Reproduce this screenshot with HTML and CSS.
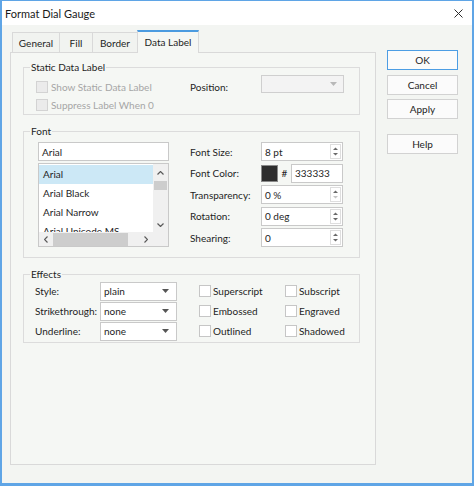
FILE: index.html
```html
<!DOCTYPE html>
<html>
<head>
<meta charset="utf-8">
<title>Format Dial Gauge</title>
<link rel="stylesheet" href="styles.css">
</head>
<body>
<div class="window">
  <div class="titlebar">
    <span class="title">Format Dial Gauge</span>
    <svg class="close" viewBox="0 0 9 9"><path d="M0.5 0.5L8.5 8.5M8.5 0.5L0.5 8.5" stroke="#2b2b2b" stroke-width="1" fill="none"/></svg>
  </div>
  <div class="client">
    <div class="tabs-wrap">
      <div class="tabstrip">
        <div class="tab t-general">General</div>
        <div class="tab t-fill">Fill</div>
        <div class="tab t-border">Border</div>
        <div class="tab t-label active">Data Label</div>
      </div>
      <div class="panel">
        <div class="group g-static">
          <div class="group-title">Static Data Label</div>
          <div class="static-grid">
            <label class="check disabled"><span class="box"></span>Show Static Data Label</label>
            <span class="lbl">Position:</span>
            <div class="combo pos-combo disabled"><span class="combo-val"></span><svg class="arrow" viewBox="0 0 7 4"><path d="M0 0H7L3.5 4Z" fill="#b8b8b8"/></svg></div>
            <label class="check disabled"><span class="box"></span>Suppress Label When 0</label>
          </div>
        </div>

        <div class="group g-font">
          <div class="group-title">Font</div>
          <div class="font-body">
            <div class="font-left">
              <div class="field font-name">Arial</div>
              <div class="listbox">
                <div class="list-items">
                  <div class="item selected">Arial</div>
                  <div class="item">Arial Black</div>
                  <div class="item">Arial Narrow</div>
                  <div class="item">Arial Unicode MS</div>
                </div>
                <div class="vscroll">
                  <span class="sb-btn"><svg class="chev" viewBox="0 0 7 4"><path d="M0.5 3.5L3.5 0.5L6.5 3.5" stroke="#5a5a5a" stroke-width="1.2" fill="none"/></svg></span>
                  <span class="vthumb"></span>
                  <span class="sb-space"></span>
                  <span class="sb-btn"><svg class="chev" viewBox="0 0 7 4"><path d="M0.5 0.5L3.5 3.5L6.5 0.5" stroke="#5a5a5a" stroke-width="1.2" fill="none"/></svg></span>
                </div>
                <div class="hscroll">
                  <span class="sb-btn hl"><svg class="chev-h" viewBox="0 0 4 7"><path d="M3.5 0.5L0.5 3.5L3.5 6.5" stroke="#5a5a5a" stroke-width="1.2" fill="none"/></svg></span>
                  <span class="hthumb"></span>
                  <span class="sb-space"></span>
                  <span class="sb-btn hr"><svg class="chev-h" viewBox="0 0 4 7"><path d="M0.5 0.5L3.5 3.5L0.5 6.5" stroke="#5a5a5a" stroke-width="1.2" fill="none"/></svg></span>
                </div>
                <div class="sb-corner"></div>
              </div>
            </div>
            <div class="font-right">
              <span class="lbl">Font Size:</span>
              <div class="field spinner"><span class="val">8 pt</span><svg class="spin" viewBox="0 0 11 15"><rect x="0.5" y="0.5" width="10" height="14" fill="#fff" stroke="#dedede"/><path d="M3 6L5.5 3.5L8 6Z" fill="#6a6a6a"/><path d="M3 9L5.5 11.5L8 9Z" fill="#6a6a6a"/></svg></div>
              <span class="lbl">Font Color:</span>
              <div class="color-row"><span class="swatch"></span><span class="hash">#</span><div class="field hex">333333</div></div>
              <span class="lbl">Transparency:</span>
              <div class="field spinner"><span class="val">0 %</span><svg class="spin" viewBox="0 0 11 15"><rect x="0.5" y="0.5" width="10" height="14" fill="#fff" stroke="#dedede"/><path d="M3 6L5.5 3.5L8 6Z" fill="#6a6a6a"/><path d="M3 9L5.5 11.5L8 9Z" fill="#c4c4c4"/></svg></div>
              <span class="lbl">Rotation:</span>
              <div class="field spinner"><span class="val">0 deg</span><svg class="spin" viewBox="0 0 11 15"><rect x="0.5" y="0.5" width="10" height="14" fill="#fff" stroke="#dedede"/><path d="M3 6L5.5 3.5L8 6Z" fill="#6a6a6a"/><path d="M3 9L5.5 11.5L8 9Z" fill="#6a6a6a"/></svg></div>
              <span class="lbl">Shearing:</span>
              <div class="field spinner"><span class="val">0</span><svg class="spin" viewBox="0 0 11 15"><rect x="0.5" y="0.5" width="10" height="14" fill="#fff" stroke="#dedede"/><path d="M3 6L5.5 3.5L8 6Z" fill="#6a6a6a"/><path d="M3 9L5.5 11.5L8 9Z" fill="#6a6a6a"/></svg></div>
            </div>
          </div>
        </div>

        <div class="group g-effects">
          <div class="group-title">Effects</div>
          <div class="effects-grid">
            <span class="lbl">Style:</span>
            <div class="combo fx-combo"><span class="combo-val">plain</span><svg class="arrow" viewBox="0 0 7 4"><path d="M0 0H7L3.5 4Z" fill="#555"/></svg></div>
            <label class="check"><span class="box"></span>Superscript</label>
            <label class="check"><span class="box"></span>Subscript</label>

            <span class="lbl">Strikethrough:</span>
            <div class="combo fx-combo"><span class="combo-val">none</span><svg class="arrow" viewBox="0 0 7 4"><path d="M0 0H7L3.5 4Z" fill="#555"/></svg></div>
            <label class="check"><span class="box"></span>Embossed</label>
            <label class="check"><span class="box"></span>Engraved</label>

            <span class="lbl">Underline:</span>
            <div class="combo fx-combo"><span class="combo-val">none</span><svg class="arrow" viewBox="0 0 7 4"><path d="M0 0H7L3.5 4Z" fill="#555"/></svg></div>
            <label class="check"><span class="box"></span>Outlined</label>
            <label class="check"><span class="box"></span>Shadowed</label>
          </div>
        </div>
      </div>
    </div>

    <div class="buttons">
      <div class="btn default">OK</div>
      <div class="btn">Cancel</div>
      <div class="btn">Apply</div>
      <div class="btn help">Help</div>
    </div>
  </div>
</div>
</body>
</html>
```

FILE: styles.css
```css
* { box-sizing: border-box; }
html, body { margin: 0; padding: 0; }
body {
  width: 474px;
  height: 486px;
  overflow: hidden;
  font-family: Lato, "Liberation Sans", sans-serif;
  font-size: 10px;
  color: #1e1e1e;
  background: #f3f5f2;
}
.window {
  width: 474px;
  height: 486px;
  border-style: solid;
  border-color: #5fa5e6;
  border-width: 1px 2px 3px 2px;
  background: #f3f5f2;
  display: flex;
  flex-direction: column;
}
.titlebar {
  flex: none;
  height: 24px;
  background: #fff;
  display: flex;
  align-items: center;
  justify-content: space-between;
  padding: 0 9px 0 3px;
}
.title { font-size: 11px; color: #1a1a1a; }
.close { width: 9px; height: 9px; display: block; }

.client {
  flex: 1;
  display: flex;
  padding: 5px 0 0 8px;
}
.tabs-wrap {
  width: 366px;
  display: flex;
  flex-direction: column;
}
.tabstrip {
  height: 22px;
  display: flex;
  align-items: flex-end;
  padding-left: 2px;
}
.tab {
  height: 20px;
  border: 1px solid #d9d9d9;
  border-bottom: none;
  margin-right: -1px;
  display: flex;
  align-items: center;
  justify-content: center;
  background: #f1f3f0;
}
.t-general { width: 48px; }
.t-fill { width: 34px; }
.t-border { width: 46px; }
.t-label { width: 62px; }
.tab.active {
  height: 23px;
  margin-bottom: -1px;
  border-top: 2px solid #4b9be0;
  background: #f5f7f4;
  padding-bottom: 1px;
  position: relative;
  z-index: 1;
}
.panel {
  width: 366px;
  height: 413px;
  border: 1px solid #d9d9d9;
  background: #f5f7f4;
  padding: 0 15px 0 12px;
}

.group { border: 1px solid #dcdcdc; }
.group-title {
  display: table;
  height: 13px;
  line-height: 13px;
  margin: -7px 0 0 6px;
  padding: 0 1px;
  background: #f5f7f4;
}
.g-static { margin-top: 14px; }
.g-font { margin-top: 16px; }
.g-effects { margin-top: 16px; }

.lbl { white-space: nowrap; }

.check { display: flex; align-items: center; white-space: nowrap; }
.box {
  flex: none;
  width: 12px;
  height: 12px;
  border: 1px solid #c6c6c6;
  background: #fff;
  margin-right: 2px;
}
.check.disabled { color: #a6a6a6; }
.check.disabled .box { background: #ebebeb; border-color: #d3d3d3; margin-right: 3px; }

.static-grid {
  display: grid;
  grid-template-columns: 154px 71px 83px;
  grid-template-rows: 18px 18px;
  align-items: center;
  margin-top: 4px;
  padding-left: 12px;
}
.combo {
  display: flex;
  align-items: center;
  justify-content: space-between;
  border: 1px solid #c9c9c9;
  background: #fff;
  padding: 0 6px 0 3px;
}
.pos-combo {
  align-self: start;
  margin-top: -3px;
  height: 18px;
  background: #f3f3f3;
  border-color: #cfcfcf;
}
.arrow { width: 7px; height: 4px; display: block; }

.font-body {
  display: flex;
  gap: 21px;
  margin-top: 4px;
  padding: 0 0 10px 14px;
}
.font-left { width: 131px; display: flex; flex-direction: column; gap: 2px; }
.field {
  height: 19px;
  border: 1px solid #c9c9c9;
  background: #fff;
  padding-left: 3px;
  display: flex;
  align-items: center;
}
.listbox {
  height: 84px;
  border: 1px solid #c9c9c9;
  background: #fff;
  display: grid;
  grid-template-columns: 114px 15px;
  grid-template-rows: 68px 14px;
}
.list-items { overflow: hidden; padding-top: 1px; }
.item { height: 19px; line-height: 19px; padding-left: 4px; white-space: nowrap; }
.item.selected { background: #cce8f6; }
.vscroll {
  background: #f0f0f0;
  display: grid;
  grid-template-rows: 17px 9px 1fr 15px;
}
.sb-btn { display: flex; align-items: center; justify-content: center; }
.chev { width: 7px; height: 4px; display: block; }
.chev-h { width: 4px; height: 7px; display: block; }
.vthumb { background: #cdcdcd; margin: 0 1px; }
.hscroll {
  background: #f0f0f0;
  display: flex;
}
.hscroll .hl { width: 14px; }
.hscroll .hr { width: 15px; }
.hthumb { width: 75px; background: #cdcdcd; margin: 1px 0 0; }
.sb-space { flex: 1; }
.sb-corner { background: #f0f0f0; }

.font-right {
  display: grid;
  grid-template-columns: 71px 82px;
  grid-auto-rows: 19px;
  row-gap: 2.5px;
  align-items: center;
}
.spinner { justify-content: space-between; padding-right: 1px; }
.spin { width: 11px; height: 15px; display: block; }
.color-row { display: flex; align-items: center; height: 19px; }
.swatch {
  width: 17px;
  height: 17px;
  background: #2e2e2e;
  border: 1px solid #8a8a8a;
  flex: none;
}
.hash { width: 13px; text-align: center; }
.hex { width: 52px; padding-left: 3px; }

.effects-grid {
  display: grid;
  grid-template-columns: 65px 99px 86px 1fr;
  grid-auto-rows: 20px;
  align-items: center;
  padding: 0 0 1px 11px;
}
.fx-combo { width: 77px; height: 19px; padding-right: 7px; }

.buttons {
  margin-left: 11px;
  width: 71px;
  display: flex;
  flex-direction: column;
  gap: 4.5px;
  padding-top: 20px;
}
.btn {
  height: 20px;
  border: 1px solid #d2d2d2;
  background: #fbfbfb;
  display: flex;
  align-items: center;
  justify-content: center;
}
.btn.default { border-color: #4d9de4; }
.btn.help { margin-top: 10.5px; }
```
